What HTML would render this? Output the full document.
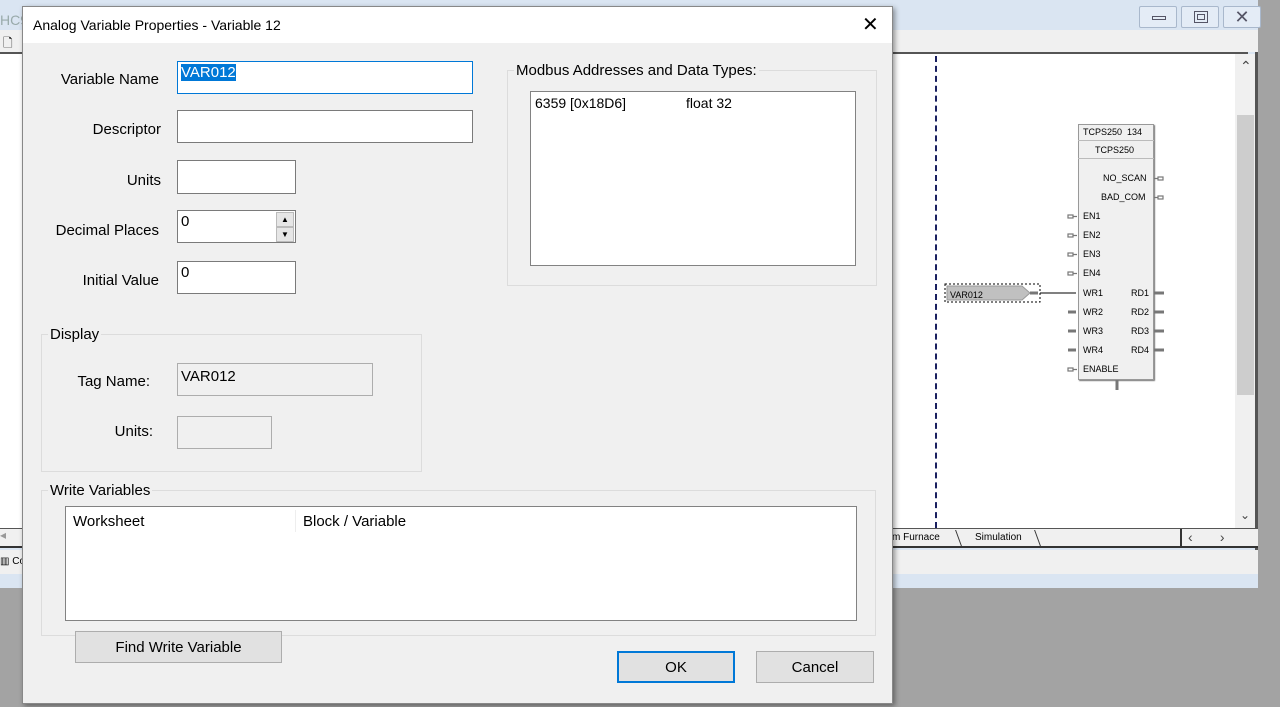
<!DOCTYPE html>
<html><head><style>
*{box-sizing:border-box;margin:0;padding:0}
body{width:1280px;height:707px;overflow:hidden;position:relative;background:#a3a3a3;font-family:"Liberation Sans",sans-serif;color:#000}
.a{position:absolute}
.lbl{position:absolute;font-size:15px;text-align:right}
.in{position:absolute;background:#fff;border:1px solid #7a7a7a;font-size:15px;padding:2px 3px}
.ro{position:absolute;background:#f0f0f0;border:1px solid #adadad;font-size:15px;padding:4px 3px}
.grp{position:absolute;border:1px solid #dcdcdc}
.gt{position:absolute;font-size:15px;background:#f0f0f0;padding:0 2px}
.btn{position:absolute;background:#e1e1e1;border:1px solid #adadad;font-size:15px;text-align:center}
.pin{position:absolute;font-size:9px;font-family:"Liberation Sans",sans-serif}
</style></head><body>
<div class="a" style="left:0;top:0;width:1258px;height:588px;background:#dae5f2"></div>
<div class="a" style="left:0;top:30px;width:1258px;height:22px;background:#f0f0f0"></div>
<div class="a" style="left:0;top:12px;font-size:14px;color:#9aa">HC9</div>
<div class="a" style="left:3px;top:34px;font-size:12px">🗋</div>
<div class="a" style="left:0;top:52px;width:1248px;height:2px;background:#555"></div>
<div class="a" style="left:0;top:54px;width:1248px;height:474px;background:#fff"></div>
<div class="a" style="left:1235px;top:54px;width:20px;height:474px;background:#f0f0f0"></div>
<div class="a" style="left:1237px;top:115px;width:17px;height:280px;background:#cdcdcd"></div>
<div class="a" style="left:1240px;top:58px;font-size:14px;color:#444">&#x2303;</div>
<div class="a" style="left:1240px;top:508px;font-size:12px;color:#444">&#x2304;</div>
<div class="a" style="left:1255px;top:52px;width:3px;height:500px;background:#555"></div>
<div class="a" style="left:0;top:528px;width:1258px;height:20px;background:#f0f0f0;border-top:1px solid #555;border-bottom:2px solid #333"></div>
<div class="a" style="left:892px;top:532px;font-size:10px">m Furnace</div>
<div class="a" style="left:975px;top:532px;font-size:10px">Simulation</div>
<div class="a" style="left:958px;top:530px;width:1px;height:16px;background:#333;transform:skewX(20deg)"></div>
<div class="a" style="left:1037px;top:530px;width:1px;height:16px;background:#333;transform:skewX(20deg)"></div>
<div class="a" style="left:1180px;top:529px;width:2px;height:18px;background:#333"></div>
<div class="a" style="left:1188px;top:529px;font-size:14px;color:#444">&lsaquo;&nbsp;&nbsp;&nbsp;&nbsp;&nbsp;&nbsp;&nbsp;&rsaquo;</div>
<div class="a" style="left:0;top:550px;width:1258px;height:24px;background:#f0f0f0"></div>
<div class="a" style="left:0;top:556px;font-size:10px">▥ Con</div>
<div class="a" style="left:0;top:528px;font-size:12px;color:#999">◂</div>
<div class="a" style="left:1139px;top:6px;width:38px;height:22px;border:1px solid #a9b8cc;background:#e4ecf6;border-radius:2px"><div class="a" style="left:12px;top:9px;width:14px;height:4px;border:1px solid #556"></div></div>
<div class="a" style="left:1181px;top:6px;width:38px;height:22px;border:1px solid #a9b8cc;background:#e4ecf6;border-radius:2px"><div class="a" style="left:12px;top:4px;width:14px;height:12px;border:1px solid #556"><div class="a" style="left:2px;top:2px;width:8px;height:6px;border:1px solid #556"></div></div></div>
<div class="a" style="left:1223px;top:6px;width:38px;height:22px;border:1px solid #a9b8cc;background:#e4ecf6;border-radius:2px;text-align:center;font-size:18px;line-height:20px;color:#556">✕</div>
<div class="a" style="left:935px;top:56px;height:472px;border-left:2px dashed #1a2060"></div>
<div class="a" style="left:1078px;top:124px;width:76px;height:256px;background:#f0f0f0;border:1px solid #999;box-shadow:1px 1px 1px #777"></div>
<div class="a" style="left:1078px;top:140px;width:76px;border-top:1px solid #bbb"></div>
<div class="a" style="left:1078px;top:158px;width:76px;border-top:1px solid #bbb"></div>
<div class="pin" style="left:1083px;top:127px">TCPS250&nbsp;&nbsp;134</div>
<div class="pin" style="left:1095px;top:145px">TCPS250</div>
<div class="pin" style="left:1103px;top:173px">NO_SCAN</div>
<div class="pin" style="left:1101px;top:192px">BAD_COM</div>
<div class="pin" style="left:1083px;top:211px">EN1</div>
<div class="pin" style="left:1083px;top:230px">EN2</div>
<div class="pin" style="left:1083px;top:249px">EN3</div>
<div class="pin" style="left:1083px;top:268px">EN4</div>
<div class="pin" style="left:1083px;top:288px">WR1</div>
<div class="pin" style="left:1083px;top:307px">WR2</div>
<div class="pin" style="left:1083px;top:326px">WR3</div>
<div class="pin" style="left:1083px;top:345px">WR4</div>
<div class="pin" style="left:1083px;top:364px">ENABLE</div>
<div class="pin" style="left:1131px;top:288px">RD1</div>
<div class="pin" style="left:1131px;top:307px">RD2</div>
<div class="pin" style="left:1131px;top:326px">RD3</div>
<div class="pin" style="left:1131px;top:345px">RD4</div>
<svg class="a" style="left:940px;top:120px" width="240" height="280">
<g fill="none" stroke="#777" stroke-width="1.2">
<rect x="218" y="57" width="5" height="3"/><rect x="218" y="76" width="5" height="3"/>
<rect x="128" y="95" width="5" height="3"/><rect x="128" y="114" width="5" height="3"/><rect x="128" y="133" width="5" height="3"/><rect x="128" y="152" width="5" height="3"/><rect x="128" y="248" width="5" height="3"/>
<path d="M214 58.5h4M214 77.5h4M133 96.5h4M133 115.5h4M133 134.5h4M133 153.5h4M133 249.5h4"/>
</g>
<g stroke="#777" stroke-width="3"><path d="M128 192h8M128 211h8M128 230h8M214 173h10M214 192h10M214 211h10M214 230h10M177 260v10"/></g>
<path d="M100 173h36" stroke="#000"/>
<rect x="5" y="164" width="95" height="18" fill="none" stroke="#000" stroke-dasharray="2,2"/>
<path d="M7 166h75l8 7-8 7H7z" fill="#c0c0c0" stroke="#999"/>
<text x="10" y="178" font-size="9" font-family="Liberation Sans">VAR012</text>
<path d="M90 173h8" stroke="#777" stroke-width="3"/>
</svg>
<div class="a" style="left:22px;top:6px;width:871px;height:698px;background:#f0f0f0;border:1px solid #888;box-shadow:2px 2px 5px rgba(0,0,0,.4)"></div>
<div class="a" style="left:23px;top:7px;width:869px;height:36px;background:#fff"></div>
<div class="a" style="left:33px;top:17px;font-size:14px">Analog Variable Properties - Variable 12</div>
<div class="a" style="left:862px;top:12px;font-size:20px;font-weight:300">✕</div>

<div class="lbl" style="left:30px;width:129px;top:71px">Variable Name</div>
<div class="in" style="left:177px;top:61px;width:296px;height:33px;border-color:#0078d7"><span style="background:#0078d7;color:#fff">VAR012</span></div>
<div class="lbl" style="left:30px;width:131px;top:121px">Descriptor</div>
<div class="in" style="left:177px;top:110px;width:296px;height:33px"></div>
<div class="lbl" style="left:30px;width:131px;top:172px">Units</div>
<div class="in" style="left:177px;top:160px;width:119px;height:34px"></div>
<div class="lbl" style="left:30px;width:129px;top:222px">Decimal Places</div>
<div class="in" style="left:177px;top:210px;width:119px;height:33px">0
<div class="a" style="left:98px;top:1px;width:18px;height:15px;background:#e6e6e6;border:1px solid #bbb;font-size:8px;text-align:center;line-height:13px">▲</div>
<div class="a" style="left:98px;top:16px;width:18px;height:15px;background:#e6e6e6;border:1px solid #bbb;font-size:8px;text-align:center;line-height:13px">▼</div></div>
<div class="lbl" style="left:30px;width:129px;top:272px">Initial Value</div>
<div class="in" style="left:177px;top:261px;width:119px;height:33px">0</div>

<div class="grp" style="left:41px;top:334px;width:381px;height:138px"></div>
<div class="gt" style="left:48px;top:326px">Display</div>
<div class="lbl" style="left:30px;width:120px;top:373px">Tag Name:</div>
<div class="ro" style="left:177px;top:363px;width:196px;height:33px">VAR012</div>
<div class="lbl" style="left:30px;width:123px;top:423px">Units:</div>
<div class="ro" style="left:177px;top:416px;width:95px;height:33px"></div>

<div class="grp" style="left:41px;top:490px;width:835px;height:146px"></div>
<div class="gt" style="left:48px;top:482px">Write Variables</div>
<div class="a" style="left:65px;top:506px;width:792px;height:115px;background:#fff;border:1px solid #828282"></div>
<div class="a" style="left:73px;top:513px;font-size:15px">Worksheet</div>
<div class="a" style="left:295px;top:510px;width:1px;height:22px;background:#eee"></div>
<div class="a" style="left:303px;top:513px;font-size:15px">Block / Variable</div>

<div class="grp" style="left:507px;top:70px;width:370px;height:216px"></div>
<div class="gt" style="left:514px;top:62px">Modbus Addresses and Data Types:</div>
<div class="a" style="left:530px;top:91px;width:326px;height:175px;background:#fff;border:1px solid #828282"></div>
<div class="a" style="left:535px;top:95px;font-size:14px">6359 [0x18D6]</div>
<div class="a" style="left:686px;top:95px;font-size:14px">float 32</div>

<div class="btn" style="left:75px;top:631px;width:207px;height:32px;line-height:32px">Find Write Variable</div>
<div class="btn" style="left:617px;top:651px;width:118px;height:32px;line-height:30px;border:2px solid #0078d7">OK</div>
<div class="btn" style="left:756px;top:651px;width:118px;height:32px;line-height:32px">Cancel</div>
</body></html>
